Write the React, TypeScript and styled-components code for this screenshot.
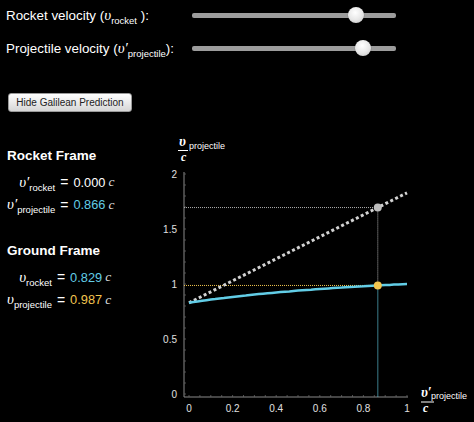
import React from 'react';
import styled, { createGlobalStyle } from 'styled-components';

const GlobalStyle = createGlobalStyle`
  html, body {
    margin: 0;
    padding: 0;
    background: #000;
  }
  body {
    font-family: "Liberation Sans", Arial, sans-serif;
    color: #fff;
    width: 474px;
    height: 422px;
    overflow: hidden;
  }
`;

const CYAN = '#62cde6';
const GOLD = '#f2c54f';

const vRocket = 0.829;
const uProj = 0.866;

// chart mapping (page coordinates)
const px = (u: number) => 189 + 218 * u;
const py = (v: number) => 394 - 110 * v;
const relAdd = (u: number) => (u + vRocket) / (1 + vRocket * u);

const Page = styled.div`
  width: 474px;
  height: 422px;
  display: flex;
  flex-direction: column;
`;

const Controls = styled.div`
  display: flex;
  flex-direction: column;
  gap: 3px;
`;

const SliderRow = styled.div`
  height: 30px;
  display: flex;
  align-items: center;
`;

const SliderLabel = styled.div`
  width: 186px;
  padding-left: 6px;
  font-size: 13.4px;
  white-space: nowrap;
  color: #fff;
`;

const Sym = styled.span`
  font-family: "Liberation Serif", "Times New Roman", serif;
  font-style: italic;
  font-size: 15px;
`;

const Sub = styled.sub`
  font-family: "Liberation Sans", Arial, sans-serif;
  font-style: normal;
  font-size: 9.5px;
  vertical-align: -4px;
  line-height: 0;
`;

const Range = styled.input.attrs({ type: 'range', min: 0, max: 1, step: 0.001 })`
  -webkit-appearance: none;
  appearance: none;
  width: 204px;
  height: 16px;
  margin: 0;
  background: transparent;

  &::-webkit-slider-runnable-track {
    height: 5px;
    border-radius: 2px;
    background: #9c9c9c;
  }
  &::-webkit-slider-thumb {
    -webkit-appearance: none;
    width: 16px;
    height: 16px;
    margin-top: -5.5px;
    border-radius: 50%;
    background: radial-gradient(circle at 45% 35%, #ffffff 0%, #e6e6e6 55%, #bdbdbd 100%);
    box-shadow: 0 1px 1px rgba(0, 0, 0, 0.5);
  }
`;

const HideButton = styled.button`
  margin: 30px 0 0 8px;
  width: 124px;
  height: 19px;
  padding: 0;
  font-family: "Liberation Sans", Arial, sans-serif;
  font-size: 10px;
  color: #222;
  background: linear-gradient(#ffffff, #d6d6d6);
  border: 1px solid #9a9a9a;
  border-radius: 3px;
  box-shadow: 0 1px 1px rgba(0, 0, 0, 0.4);
`;

const Lower = styled.div`
  margin-top: 20px;
  display: flex;
`;

const FramePanel = styled.div`
  width: 150px;
  padding: 15px 0 0 7px;
  box-sizing: border-box;
  display: flex;
  flex-direction: column;
`;

const FrameTitle = styled.div<{ $gap: number }>`
  margin-top: ${(p) => p.$gap}px;
  font-size: 13.5px;
  font-weight: bold;
  line-height: 18px;
`;

const EqTable = styled.div`
  display: inline-grid;
  grid-template-columns: auto auto auto;
  align-self: flex-start;
  margin-top: 6px;
`;

const EqLhs = styled.div`
  height: 22.5px;
  display: flex;
  align-items: center;
  justify-content: flex-end;
`;

const EqSign = styled.div`
  height: 22.5px;
  display: flex;
  align-items: center;
  padding: 0 5px;
  font-size: 14px;
`;

const EqValue = styled.div<{ $color: string }>`
  height: 22.5px;
  display: flex;
  align-items: center;
  font-size: 12.8px;
  color: ${(p) => p.$color};
`;

const CSym = styled.span`
  margin-left: 3px;
  font-family: "Liberation Serif", "Times New Roman", serif;
  font-style: italic;
  font-size: 13.5px;
  color: #ddd;
`;

const Chart = styled.svg`
  display: block;
  font-family: "Liberation Sans", Arial, sans-serif;
`;

type Eq = { lhs: React.ReactNode; value: string; color: string };

const Velocity: React.FC<{ prime?: boolean; sub: string }> = ({ prime, sub }) => (
  <Sym>
    υ{prime ? '′' : ''}
    <Sub>{sub}</Sub>
  </Sym>
);

const Equations: React.FC<{ rows: Eq[] }> = ({ rows }) => (
  <EqTable>
    {rows.map((r, i) => (
      <React.Fragment key={i}>
        <EqLhs>{r.lhs}</EqLhs>
        <EqSign>=</EqSign>
        <EqValue $color={r.color}>
          {r.value}
          <CSym>c</CSym>
        </EqValue>
      </React.Fragment>
    ))}
  </EqTable>
);

const VelocityChart: React.FC = () => {
  const relPts: string[] = [];
  for (let i = 0; i <= 50; i++) {
    const u = i / 50;
    relPts.push(`${px(u).toFixed(1)},${py(relAdd(u)).toFixed(1)}`);
  }
  const vGal = vRocket + uProj;
  const vRel = relAdd(uProj);
  const xu = px(uProj);
  const yTicks = [0, 0.5, 1, 1.5, 2];
  const xTicks = [0, 0.2, 0.4, 0.6, 0.8, 1];
  const minorY: number[] = [];
  for (let v = 0; v <= 2.001; v += 0.1) minorY.push(v);
  const minorX: number[] = [];
  for (let u = 0; u <= 1.001; u += 0.05) minorX.push(u);

  return (
    <Chart width={324} height={290} viewBox="150 132 324 290">
      {/* axes */}
      <line x1={184} y1={172} x2={184} y2={397} stroke="#8a8a8a" strokeWidth={1} />
      <line x1={184} y1={397} x2={408} y2={397} stroke="#8a8a8a" strokeWidth={1} />
      {minorY.map((v, i) => (
        <line key={`my${i}`} x1={184} y1={py(v)} x2={186} y2={py(v)} stroke="#666" strokeWidth={0.8} />
      ))}
      {minorX.map((u, i) => (
        <line key={`mx${i}`} x1={px(u)} y1={397} x2={px(u)} y2={395} stroke="#666" strokeWidth={0.8} />
      ))}
      {yTicks.map((v) => (
        <text key={`y${v}`} x={177} y={py(v) + 3.5} fontSize={10} fill="#e0e0e0" textAnchor="end">
          {v}
        </text>
      ))}
      {xTicks.map((u) => (
        <text key={`x${u}`} x={px(u)} y={412} fontSize={10} fill="#e0e0e0" textAnchor="middle">
          {u}
        </text>
      ))}

      {/* guide lines */}
      <line x1={184} y1={py(vGal)} x2={xu} y2={py(vGal)} stroke="#b0b0b0" strokeWidth={1} strokeDasharray="1 1" />
      <line x1={xu} y1={py(vGal)} x2={xu} y2={py(vRel)} stroke="#b0b0b0" strokeWidth={1} strokeDasharray="1 1" />
      <line x1={184} y1={py(vRel)} x2={xu} y2={py(vRel)} stroke={GOLD} strokeWidth={1} strokeDasharray="1 1" />
      <line x1={xu} y1={py(vRel)} x2={xu} y2={397} stroke={CYAN} strokeWidth={1.2} strokeDasharray="1 1" />

      {/* galilean prediction */}
      <line
        x1={px(0)}
        y1={py(vRocket)}
        x2={px(1)}
        y2={py(vRocket + 1)}
        stroke="#d2d2d2"
        strokeWidth={3}
        strokeDasharray="3 2.5"
      />
      {/* relativistic */}
      <polyline points={relPts.join(' ')} fill="none" stroke={CYAN} strokeWidth={2.5} />

      <circle cx={xu} cy={py(vGal)} r={4} fill="#bdbdbd" />
      <circle cx={xu} cy={py(vRel)} r={4} fill={GOLD} />

      {/* y axis label */}
      <text x={179} y={146} fontSize={14} fill="#fff" fontWeight="bold" fontStyle="italic" fontFamily='"Liberation Serif", serif'>
        υ
      </text>
      <text x={189} y={149} fontSize={9} fill="#fff">
        projectile
      </text>
      <line x1={178} y1={150.5} x2={188} y2={150.5} stroke="#fff" strokeWidth={1} />
      <text x={181} y={161} fontSize={12} fill="#fff" fontWeight="bold" fontStyle="italic" fontFamily='"Liberation Serif", serif'>
        c
      </text>

      {/* x axis label */}
      <text x={421} y={397} fontSize={14} fill="#fff" fontWeight="bold" fontStyle="italic" fontFamily='"Liberation Serif", serif'>
        υ′
      </text>
      <text x={431} y={399} fontSize={9} fill="#fff">
        projectile
      </text>
      <line x1={421} y1={402} x2={434} y2={402} stroke="#fff" strokeWidth={1} />
      <text x={423} y={412} fontSize={12} fill="#fff" fontWeight="bold" fontStyle="italic" fontFamily='"Liberation Serif", serif'>
        c
      </text>
    </Chart>
  );
};

const App: React.FC = () => (
  <Page>
    <GlobalStyle />
    <Controls>
      <SliderRow>
        <SliderLabel>
          Rocket velocity (<Velocity sub="rocket" /> ):
        </SliderLabel>
        <Range defaultValue={vRocket} />
      </SliderRow>
      <SliderRow>
        <SliderLabel>
          Projectile velocity (<Velocity prime sub="projectile" />):
        </SliderLabel>
        <Range defaultValue={uProj} />
      </SliderRow>
    </Controls>
    <div>
      <HideButton>Hide Galilean Prediction</HideButton>
    </div>
    <Lower>
      <FramePanel>
        <FrameTitle $gap={0}>Rocket Frame</FrameTitle>
        <Equations
          rows={[
            { lhs: <Velocity prime sub="rocket" />, value: '0.000', color: '#fff' },
            { lhs: <Velocity prime sub="projectile" />, value: '0.866', color: CYAN },
          ]}
        />
        <FrameTitle $gap={26}>Ground Frame</FrameTitle>
        <Equations
          rows={[
            { lhs: <Velocity sub="rocket" />, value: '0.829', color: CYAN },
            { lhs: <Velocity sub="projectile" />, value: '0.987', color: GOLD },
          ]}
        />
      </FramePanel>
      <VelocityChart />
    </Lower>
  </Page>
);

export default App;
